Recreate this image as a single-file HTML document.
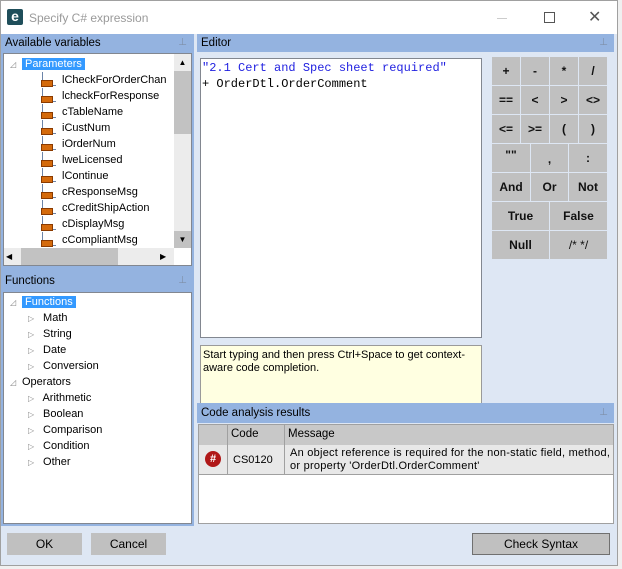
<!DOCTYPE html>
<html><head><style>
*{box-sizing:border-box;margin:0;padding:0}
body{width:622px;height:569px;background:#f0f0f0;font-family:"Liberation Sans",sans-serif;font-size:11px;color:#000;position:relative;overflow:hidden}
.abs{position:absolute}
.win{left:0;top:0;width:618px;height:566px;background:#dee7f4;border:1px solid #a0a0a0}
.title{left:1px;top:1px;width:616px;height:33px;background:#fff}
.hdr{background:#94b3e0;height:18px;line-height:18px;padding-left:4px;font-size:11.5px}
.pin{position:absolute;right:6px;top:0;color:#7f8fa8;font-size:10px}
.box{background:#fff;border:1px solid #828790}
.tree div{height:16px;line-height:16px;white-space:nowrap}
.sel{background:#3399ff;color:#fff;padding:0 3px}
.ico{display:inline-block;width:14px;height:14px;vertical-align:-3px;margin-right:6px;position:relative;border-left:1px solid #6b84a8;border-bottom:1px solid #6b84a8;border-radius:0 0 0 3px}
.ico:after{content:"";position:absolute;left:-2px;bottom:-2px;width:10px;height:5px;background:#d46a0c;border:1px solid #8a3a00}
.tri{color:#888;font-size:8px;display:inline-block;width:12px}
.btn{position:absolute;background:#c0c0c0;text-align:center;font-weight:bold;font-size:12px;color:#111}
.pb{position:absolute;background:#c0c0c0;text-align:center;font-size:12px;line-height:22px}
</style></head><body>
<div class="abs win"></div>
<div class="abs title"></div>
<div class="abs" style="left:7px;top:9px;width:16px;height:16px;background:#1f4e5a;border-radius:2px;color:#fff;font-weight:bold;font-size:14px;line-height:14px;text-align:center">e</div>
<div class="abs" style="left:29px;top:11px;font-size:12px;color:#9a9a9a">Specify C# expression</div>
<div class="abs" style="left:497px;top:18px;width:10px;height:1px;background:#ccc"></div>
<div class="abs" style="left:544px;top:12px;width:11px;height:11px;border:1px solid #555"></div>
<div class="abs" style="left:588px;top:7px;font-size:16px;color:#555">✕</div>

<div class="abs" style="left:1px;top:34px;width:193px;height:492px;background:#94b3e0"></div>
<div class="abs hdr" style="left:1px;top:34px;width:192px">Available variables<span class="pin">⊥</span></div>
<div class="abs box tree" style="left:3px;top:53px;width:189px;height:213px;padding-top:2px">
<div><span class="tri" style="margin-left:6px">◿</span><span class="sel">Parameters</span></div>
<div style="padding-left:38px"><span class="ico"></span>lCheckForOrderChan</div>
<div style="padding-left:38px"><span class="ico"></span>lcheckForResponse</div>
<div style="padding-left:38px"><span class="ico"></span>cTableName</div>
<div style="padding-left:38px"><span class="ico"></span>iCustNum</div>
<div style="padding-left:38px"><span class="ico"></span>iOrderNum</div>
<div style="padding-left:38px"><span class="ico"></span>lweLicensed</div>
<div style="padding-left:38px"><span class="ico"></span>lContinue</div>
<div style="padding-left:38px"><span class="ico"></span>cResponseMsg</div>
<div style="padding-left:38px"><span class="ico"></span>cCreditShipAction</div>
<div style="padding-left:38px"><span class="ico"></span>cDisplayMsg</div>
<div style="padding-left:38px"><span class="ico"></span>cCompliantMsg</div>
<div style="padding-left:38px"><span class="ico"></span></div>
</div>
<div class="abs" style="left:174px;top:54px;width:17px;height:194px;background:#ececec"></div>
<div class="abs" style="left:174px;top:54px;width:17px;height:17px;font-size:8px;text-align:center;line-height:17px">▲</div>
<div class="abs" style="left:174px;top:71px;width:17px;height:63px;background:#c2c2c2"></div>
<div class="abs" style="left:174px;top:231px;width:17px;height:17px;background:#c2c2c2;font-size:8px;text-align:center;line-height:17px">▼</div>
<div class="abs" style="left:4px;top:248px;width:170px;height:17px;background:#ececec"></div>
<div class="abs" style="left:21px;top:248px;width:97px;height:17px;background:#c2c2c2"></div>
<div class="abs" style="left:6px;top:248px;font-size:8px;line-height:17px">◀</div>
<div class="abs" style="left:160px;top:248px;font-size:8px;line-height:17px">▶</div>

<div class="abs hdr" style="left:1px;top:272px;width:192px">Functions<span class="pin">⊥</span></div>
<div class="abs box tree" style="left:3px;top:292px;width:189px;height:232px;padding-top:1px">
<div><span class="tri" style="margin-left:6px">◿</span><span class="sel">Functions</span></div>
<div style="padding-left:24px"><span class="tri">▷</span> Math</div>
<div style="padding-left:24px"><span class="tri">▷</span> String</div>
<div style="padding-left:24px"><span class="tri">▷</span> Date</div>
<div style="padding-left:24px"><span class="tri">▷</span> Conversion</div>
<div><span class="tri" style="margin-left:6px">◿</span>Operators</div>
<div style="padding-left:24px"><span class="tri">▷</span> Arithmetic</div>
<div style="padding-left:24px"><span class="tri">▷</span> Boolean</div>
<div style="padding-left:24px"><span class="tri">▷</span> Comparison</div>
<div style="padding-left:24px"><span class="tri">▷</span> Condition</div>
<div style="padding-left:24px"><span class="tri">▷</span> Other</div>
</div>

<div class="abs hdr" style="left:197px;top:34px;width:417px">Editor<span class="pin">⊥</span></div>
<div class="abs box" style="left:200px;top:58px;width:282px;height:280px;font-family:'Liberation Mono',monospace;font-size:12px;line-height:16px;padding:1px 1px">
<div style="color:#1f1fe0">"2.1 Cert and Spec sheet required"</div>
<div>+ OrderDtl.OrderComment</div>
</div>
<div class="abs" style="left:200px;top:345px;width:282px;height:60px;background:#ffffe1;border:1px solid #9a9a9a;padding:3px 2px;font-size:11px;line-height:13px">Start typing and then press Ctrl+Space to get context-aware code completion.</div>

<div class="btn" style="left:492px;top:57px;width:28px;height:28px;line-height:28px">+</div>
<div class="btn" style="left:521px;top:57px;width:28px;height:28px;line-height:28px">-</div>
<div class="btn" style="left:550px;top:57px;width:28px;height:28px;line-height:28px">*</div>
<div class="btn" style="left:579px;top:57px;width:28px;height:28px;line-height:28px">/</div>
<div class="btn" style="left:492px;top:86px;width:28px;height:28px;line-height:28px">==</div>
<div class="btn" style="left:521px;top:86px;width:28px;height:28px;line-height:28px">&lt;</div>
<div class="btn" style="left:550px;top:86px;width:28px;height:28px;line-height:28px">&gt;</div>
<div class="btn" style="left:579px;top:86px;width:28px;height:28px;line-height:28px">&lt;&gt;</div>
<div class="btn" style="left:492px;top:115px;width:28px;height:28px;line-height:28px">&lt;=</div>
<div class="btn" style="left:521px;top:115px;width:28px;height:28px;line-height:28px">&gt;=</div>
<div class="btn" style="left:550px;top:115px;width:28px;height:28px;line-height:28px">(</div>
<div class="btn" style="left:579px;top:115px;width:28px;height:28px;line-height:28px">)</div>
<div class="btn" style="left:492px;top:144px;width:38px;height:28px;line-height:22px">""</div>
<div class="btn" style="left:531px;top:144px;width:37px;height:28px;line-height:30px">,</div>
<div class="btn" style="left:569px;top:144px;width:38px;height:28px;line-height:28px">:</div>
<div class="btn" style="left:492px;top:173px;width:38px;height:28px;line-height:28px">And</div>
<div class="btn" style="left:531px;top:173px;width:37px;height:28px;line-height:28px">Or</div>
<div class="btn" style="left:569px;top:173px;width:38px;height:28px;line-height:28px">Not</div>
<div class="btn" style="left:492px;top:202px;width:57px;height:28px;line-height:28px">True</div>
<div class="btn" style="left:550px;top:202px;width:57px;height:28px;line-height:28px">False</div>
<div class="btn" style="left:492px;top:231px;width:57px;height:28px;line-height:28px">Null</div>
<div class="btn" style="left:550px;top:231px;width:57px;height:28px;line-height:28px;font-weight:normal">/* */</div>

<div class="abs hdr" style="left:197px;top:403px;width:417px;height:20px;line-height:20px">Code analysis results<span class="pin">⊥</span></div>
<div class="abs" style="left:198px;top:424px;width:416px;height:100px;background:#fff;border:1px solid #a0a0a0"></div>
<div class="abs" style="left:199px;top:425px;width:414px;height:20px;background:#c8c8c8"></div>
<div class="abs" style="left:199px;top:445px;width:414px;height:30px;background:#e8e8e8;border-bottom:1px solid #a0a0a0"></div>
<div class="abs" style="left:227px;top:425px;width:1px;height:50px;background:#a0a0a0"></div>
<div class="abs" style="left:284px;top:425px;width:1px;height:50px;background:#a0a0a0"></div>
<div class="abs" style="left:231px;top:428px;font-size:11.5px">Code</div>
<div class="abs" style="left:288px;top:428px;font-size:11.5px">Message</div>
<div class="abs" style="left:205px;top:451px;width:16px;height:16px;border-radius:50%;background:#b01818;color:#fff;font-weight:bold;font-size:11px;text-align:center;line-height:16px">#</div>
<div class="abs" style="left:233px;top:454px">CS0120</div>
<div class="abs" style="left:290px;top:447px;line-height:13px;width:322px;letter-spacing:0.25px">An object reference is required for the non-static field, method, or property 'OrderDtl.OrderComment'</div>

<div class="pb" style="left:7px;top:533px;width:75px;height:22px">OK</div>
<div class="pb" style="left:91px;top:533px;width:75px;height:22px">Cancel</div>
<div class="pb" style="left:472px;top:533px;width:138px;height:22px;border:1px solid #707070;line-height:20px">Check Syntax</div>
</body></html>
